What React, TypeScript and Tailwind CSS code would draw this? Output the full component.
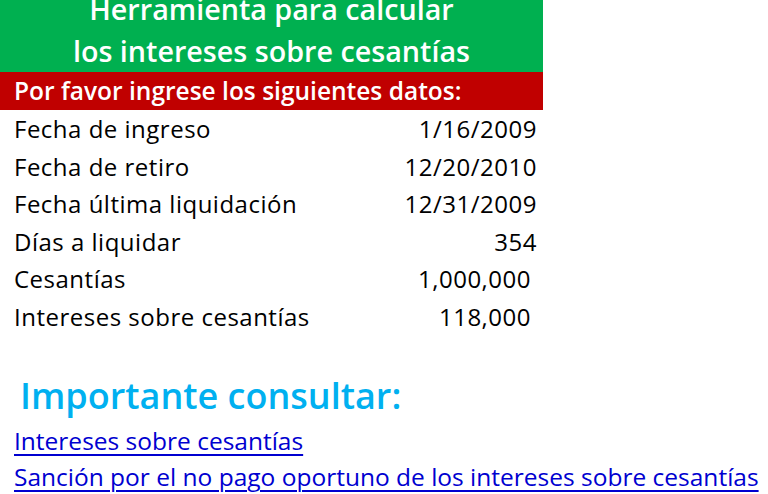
import React from 'react';

const rows: { label: string; value: string; pad: string }[] = [
  { label: 'Fecha de ingreso', value: '1/16/2009', pad: 'pr-[6px]' },
  { label: 'Fecha de retiro', value: '12/20/2010', pad: 'pr-[6px]' },
  { label: 'Fecha última liquidación', value: '12/31/2009', pad: 'pr-[6px]' },
  { label: 'Días a liquidar', value: '354', pad: 'pr-[6px]' },
  { label: 'Cesantías', value: '1,000,000', pad: 'pr-[12px]' },
  { label: 'Intereses sobre cesantías', value: '118,000', pad: 'pr-[12px]' },
];

export default function App() {
  return (
    <div className="w-[768px] h-[494px] overflow-hidden bg-white font-['Open_Sans',sans-serif] text-black [font-variant-ligatures:none]">
      <div className="w-[543px]">
        <div className="h-[72px] bg-[#00b050] text-white font-semibold text-center text-[28.7px] leading-[42px] overflow-hidden">
          <div className="-mt-[12px]">
            <div>Herramienta para calcular</div>
            <div>los intereses sobre cesantías</div>
          </div>
        </div>
        <div className="h-[38px] bg-[#c00000] text-white font-semibold text-[24.5px] leading-[38px] pl-[14px]">
          Por favor ingrese los siguientes datos:
        </div>
        {rows.map((r) => (
          <div key={r.label} className="flex justify-between h-[37.5px] text-[24px] tracking-[0.5px] leading-[37.5px]">
            <span className="pl-[14px]">{r.label}</span>
            <span className={r.pad}>{r.value}</span>
          </div>
        ))}
      </div>
      <div className="mt-[39px] pl-[20px] text-[36px] leading-[44px] font-semibold text-[#00b0f0]">
        Importante consultar:
      </div>
      <div className="mt-[5px] pl-[14px] text-[24.5px] leading-[36px] text-[#0000d0]">
        <div>
          <a href="#" className="underline underline-offset-[4px] decoration-[1.5px]">Intereses sobre cesantías</a>
        </div>
        <div>
          <a href="#" className="underline underline-offset-[4px] decoration-[1.5px]">Sanción por el no pago oportuno de los intereses sobre cesantías</a>
        </div>
      </div>
    </div>
  );
}
